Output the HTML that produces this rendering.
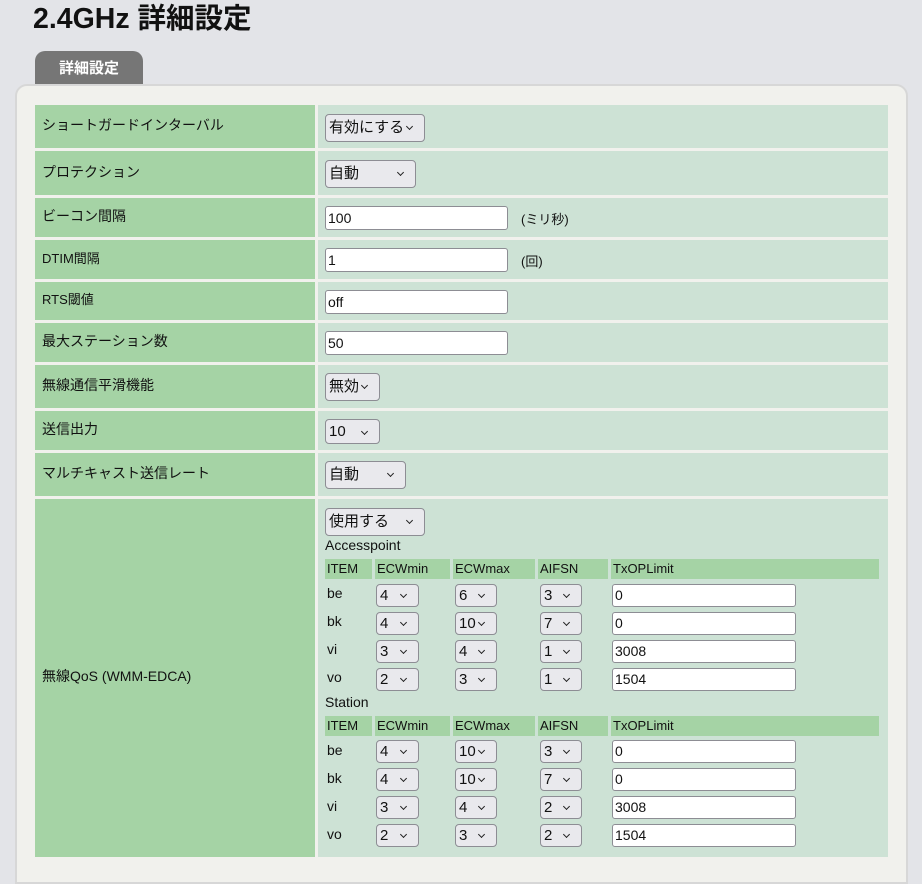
<!DOCTYPE html>
<html><head><meta charset="utf-8"><style>
*{margin:0;padding:0;box-sizing:border-box}
body{width:922px;height:859px;overflow:hidden;background:#e3e4e8;font-family:"Liberation Sans","Noto Sans CJK JP",sans-serif;color:#111;position:relative}
.a{position:absolute}
h1{position:absolute;left:33px;top:-4px;font-size:28.5px;font-weight:bold;color:#111;white-space:nowrap}
.tab{left:35px;top:51px;width:108px;height:34px;background:#767676;border-radius:10px 10px 0 0;color:#fff;font-weight:bold;font-size:15px;text-align:center;line-height:36px}
.panel{left:15px;top:84px;width:893px;height:800px;background:#f1f1ed;border:2px solid #d7d7d7;border-radius:12px 12px 0 0}
.L{position:absolute;left:35px;width:280px;background:#a5d3a5;font-size:14px;padding-left:7px}
.R{position:absolute;left:318px;width:570px;background:#cde2d5}
.sel{position:absolute;height:28px;border:1px solid #8d8d94;border-radius:4px;background:#e9e9ed;font-size:15px;line-height:26px;padding-left:3px;white-space:nowrap}
.sel:after{content:"";position:absolute;right:12px;top:9px;width:4px;height:4px;border-right:1.4px solid #222;border-bottom:1.4px solid #222;transform:rotate(45deg)}
.s2{height:23px;line-height:21px}
.s2:after{top:7px}
.in{position:absolute;left:325px;width:183px;height:24px;background:#fff;border:1px solid #8d8d94;border-radius:3px;font-size:14px;line-height:22px;padding-left:2px}
.t{position:absolute;font-size:14px;white-space:nowrap}
.hd{position:absolute;height:20px;background:#a5d3a5;font-size:13px;line-height:20px;padding-left:2px}
</style></head><body>
<h1>2.4GHz 詳細設定</h1>
<div class="a tab">詳細設定</div>
<div class="a panel"></div>

<div class="L" style="top:105px;height:43px;line-height:41px">ショートガードインターバル</div><div class="R" style="top:105px;height:43px"></div>
<div class="L" style="top:151px;height:44px;line-height:42px">プロテクション</div><div class="R" style="top:151px;height:44px"></div>
<div class="L" style="top:198px;height:39px;line-height:37px">ビーコン間隔</div><div class="R" style="top:198px;height:39px"></div>
<div class="L" style="top:240px;height:39px;line-height:37px;font-size:13px">DTIM間隔</div><div class="R" style="top:240px;height:39px"></div>
<div class="L" style="top:282px;height:38px;line-height:36px;font-size:13px">RTS閾値</div><div class="R" style="top:282px;height:38px"></div>
<div class="L" style="top:323px;height:39px;line-height:37px">最大ステーション数</div><div class="R" style="top:323px;height:39px"></div>
<div class="L" style="top:365px;height:43px;line-height:41px">無線通信平滑機能</div><div class="R" style="top:365px;height:43px"></div>
<div class="L" style="top:411px;height:39px;line-height:37px">送信出力</div><div class="R" style="top:411px;height:39px"></div>
<div class="L" style="top:453px;height:43px;line-height:41px">マルチキャスト送信レート</div><div class="R" style="top:453px;height:43px"></div>
<div class="L" style="top:499px;height:358px;line-height:354px">無線QoS (WMM-EDCA)</div><div class="R" style="top:499px;height:358px"></div>

<div class="sel" style="left:325px;top:114px;width:100px">有効にする</div>
<div class="sel" style="left:325px;top:160px;width:91px">自動</div>
<div class="in" style="top:206px">100</div><div class="t" style="left:521px;top:209px;font-size:13px">(ミリ秒)</div>
<div class="in" style="top:248px">1</div><div class="t" style="left:521px;top:251px;font-size:13px">(回)</div>
<div class="in" style="top:290px">off</div>
<div class="in" style="top:331px">50</div>
<div class="sel" style="left:325px;top:373px;width:55px">無効</div>
<div class="sel" style="left:325px;top:419px;width:55px;height:25px;line-height:23px">10</div>
<div class="sel" style="left:325px;top:461px;width:81px">自動</div>
<div class="sel" style="left:325px;top:508px;width:100px">使用する</div>

<div class="t" style="left:325px;top:537px">Accesspoint</div>
<div class="hd" style="left:325px;top:559px;width:47px">ITEM</div>
<div class="hd" style="left:375px;top:559px;width:75px">ECWmin</div>
<div class="hd" style="left:453px;top:559px;width:82px">ECWmax</div>
<div class="hd" style="left:538px;top:559px;width:70px">AIFSN</div>
<div class="hd" style="left:611px;top:559px;width:268px">TxOPLimit</div>

<div class="t" style="left:327px;top:585px">be</div><div class="sel s2" style="left:376px;top:584px;width:43px">4</div><div class="sel s2" style="left:455px;top:584px;width:42px">6</div><div class="sel s2" style="left:540px;top:584px;width:42px">3</div><div class="in" style="left:612px;top:584px;width:184px;height:23px;line-height:21px">0</div>
<div class="t" style="left:327px;top:613px">bk</div><div class="sel s2" style="left:376px;top:612px;width:43px">4</div><div class="sel s2" style="left:455px;top:612px;width:42px">10</div><div class="sel s2" style="left:540px;top:612px;width:42px">7</div><div class="in" style="left:612px;top:612px;width:184px;height:23px;line-height:21px">0</div>
<div class="t" style="left:327px;top:641px">vi</div><div class="sel s2" style="left:376px;top:640px;width:43px">3</div><div class="sel s2" style="left:455px;top:640px;width:42px">4</div><div class="sel s2" style="left:540px;top:640px;width:42px">1</div><div class="in" style="left:612px;top:640px;width:184px;height:23px;line-height:21px">3008</div>
<div class="t" style="left:327px;top:669px">vo</div><div class="sel s2" style="left:376px;top:668px;width:43px">2</div><div class="sel s2" style="left:455px;top:668px;width:42px">3</div><div class="sel s2" style="left:540px;top:668px;width:42px">1</div><div class="in" style="left:612px;top:668px;width:184px;height:23px;line-height:21px">1504</div>

<div class="t" style="left:325px;top:694px">Station</div>
<div class="hd" style="left:325px;top:716px;width:47px">ITEM</div>
<div class="hd" style="left:375px;top:716px;width:75px">ECWmin</div>
<div class="hd" style="left:453px;top:716px;width:82px">ECWmax</div>
<div class="hd" style="left:538px;top:716px;width:70px">AIFSN</div>
<div class="hd" style="left:611px;top:716px;width:268px">TxOPLimit</div>

<div class="t" style="left:327px;top:742px">be</div><div class="sel s2" style="left:376px;top:740px;width:43px">4</div><div class="sel s2" style="left:455px;top:740px;width:42px">10</div><div class="sel s2" style="left:540px;top:740px;width:42px">3</div><div class="in" style="left:612px;top:740px;width:184px;height:23px;line-height:21px">0</div>
<div class="t" style="left:327px;top:770px">bk</div><div class="sel s2" style="left:376px;top:768px;width:43px">4</div><div class="sel s2" style="left:455px;top:768px;width:42px">10</div><div class="sel s2" style="left:540px;top:768px;width:42px">7</div><div class="in" style="left:612px;top:768px;width:184px;height:23px;line-height:21px">0</div>
<div class="t" style="left:327px;top:798px">vi</div><div class="sel s2" style="left:376px;top:796px;width:43px">3</div><div class="sel s2" style="left:455px;top:796px;width:42px">4</div><div class="sel s2" style="left:540px;top:796px;width:42px">2</div><div class="in" style="left:612px;top:796px;width:184px;height:23px;line-height:21px">3008</div>
<div class="t" style="left:327px;top:826px">vo</div><div class="sel s2" style="left:376px;top:824px;width:43px">2</div><div class="sel s2" style="left:455px;top:824px;width:42px">3</div><div class="sel s2" style="left:540px;top:824px;width:42px">2</div><div class="in" style="left:612px;top:824px;width:184px;height:23px;line-height:21px">1504</div>
</body></html>
